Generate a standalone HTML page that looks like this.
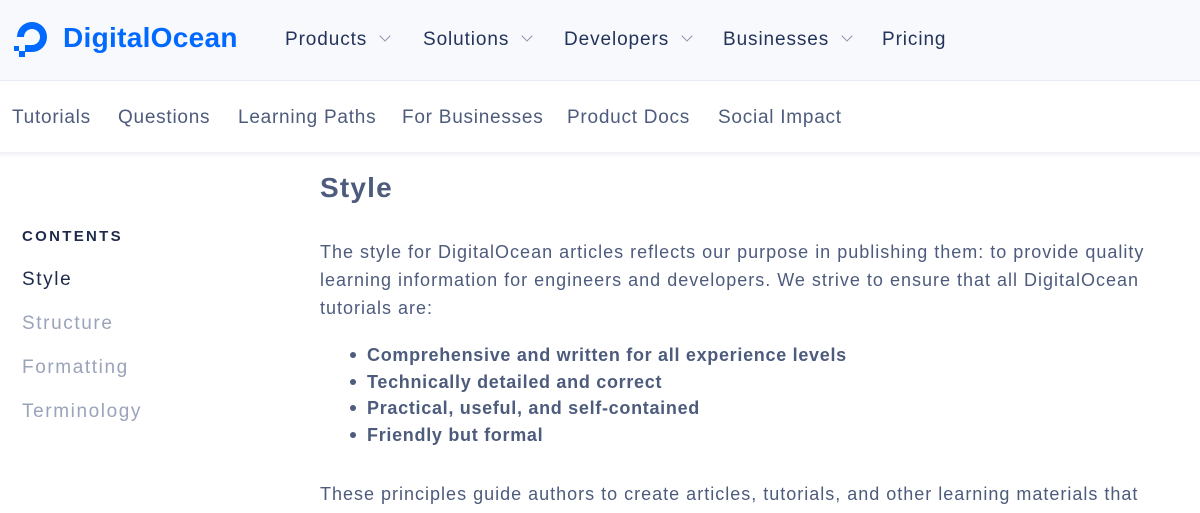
<!DOCTYPE html>
<html><head><meta charset="utf-8"><style>
*{margin:0;padding:0;box-sizing:border-box}
body{width:1200px;height:513px;overflow:hidden;background:#fff;font-family:"Liberation Sans",sans-serif;position:relative}
.top{position:absolute;left:0;top:0;width:1200px;height:81px;background:#f7f9fd;border-bottom:1px solid #e6ebf5}
.logo{position:absolute;left:11px;top:19px}
.brand{position:absolute;left:63px;top:22px;font-size:28px;font-weight:bold;color:#0069ff;letter-spacing:0.3px}
.nav{position:absolute;top:29px;font-size:19px;color:#24335a;letter-spacing:0.9px}
.chev{display:inline-block;width:8px;height:8px;border-right:1.5px solid #8a94ad;border-bottom:1.5px solid #8a94ad;transform:rotate(45deg);margin-left:14px;position:relative;top:-5px}
.sub{position:absolute;top:107px;font-size:19px;color:#4d5b7c;letter-spacing:0.75px}
.shadow{position:absolute;left:0;top:152px;width:1200px;height:6px;background:linear-gradient(#f0f1f4,#fff)}
.h{position:absolute;left:320px;top:172px;font-size:28px;font-weight:bold;color:#4d5b7c;letter-spacing:1.2px}
.contents{position:absolute;left:22px;top:228px;font-size:15px;font-weight:bold;letter-spacing:2.3px;color:#1e2a4a}
.toc{position:absolute;left:22px;font-size:19px;color:#9aa3b9;letter-spacing:1.6px}
.p{position:absolute;left:320px;font-size:18px;color:#4d5b7c;line-height:28px;letter-spacing:1px;white-space:nowrap}
ul{position:absolute;left:367px;top:342px;font-size:18px;font-weight:bold;color:#4d5b7c;line-height:26.5px;list-style:none;letter-spacing:0.7px}
li:before{content:"";position:absolute;left:-17px;width:6px;height:6px;border-radius:50%;background:#4d5b7c;margin-top:10px}
</style></head><body>
<div class="top">
<svg class="logo" width="40" height="38" viewBox="0 0 40 38"><path d="M21 33 V26 A8 8 0 1 0 13 18 H6 A15 15 0 1 1 21 33Z" fill="#0069ff"/><rect x="14" y="26" width="7" height="7" fill="#0069ff"/><rect x="8" y="32" width="6" height="6" fill="#0069ff"/><rect x="3" y="27" width="5" height="5" fill="#0069ff"/></svg>
<div class="brand">DigitalOcean</div>
<div class="nav" style="left:285px">Products<span class="chev"></span></div>
<div class="nav" style="left:423px">Solutions<span class="chev"></span></div>
<div class="nav" style="left:564px">Developers<span class="chev"></span></div>
<div class="nav" style="left:723px">Businesses<span class="chev"></span></div>
<div class="nav" style="left:882px">Pricing</div>
</div>
<div class="sub" style="left:12px">Tutorials</div>
<div class="sub" style="left:118px">Questions</div>
<div class="sub" style="left:238px">Learning Paths</div>
<div class="sub" style="left:402px">For Businesses</div>
<div class="sub" style="left:567px">Product Docs</div>
<div class="sub" style="left:718px">Social Impact</div>
<div class="shadow"></div>
<div class="h">Style</div>
<div class="contents">CONTENTS</div>
<div class="toc" style="top:269px;color:#1e2a4a">Style</div>
<div class="toc" style="top:313px">Structure</div>
<div class="toc" style="top:357px">Formatting</div>
<div class="toc" style="top:401px">Terminology</div>
<div class="p" style="top:238px">The style for DigitalOcean articles reflects our purpose in publishing them: to provide quality<br>learning information for engineers and developers. We strive to ensure that all DigitalOcean<br>tutorials are:</div>
<ul><li>Comprehensive and written for all experience levels</li><li>Technically detailed and correct</li><li>Practical, useful, and self-contained</li><li>Friendly but formal</li></ul>
<div class="p" style="top:480px">These principles guide authors to create articles, tutorials, and other learning materials that</div>
</body></html>
